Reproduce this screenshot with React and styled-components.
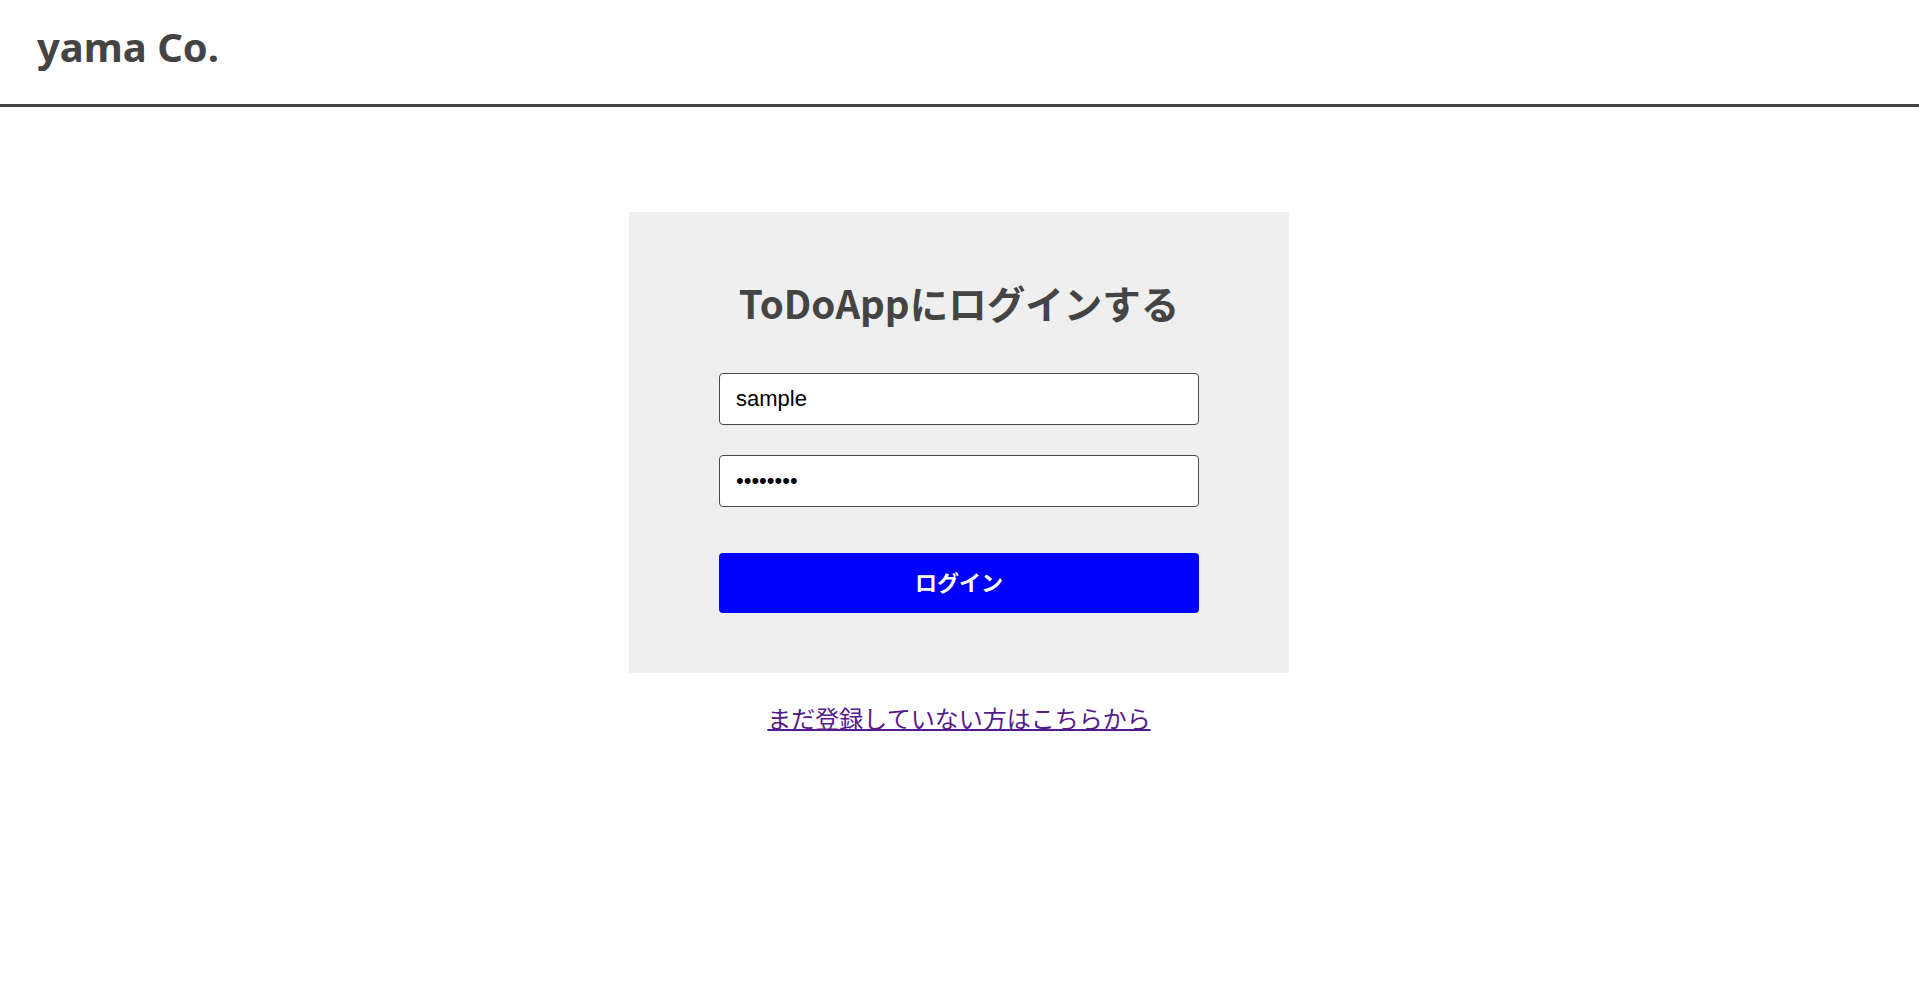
import React from "react";
import styled, { createGlobalStyle } from "styled-components";

const GlobalStyle = createGlobalStyle`
  html, body { margin: 0; padding: 0; background: #fff; }
  body { font-family: "Noto Sans CJK JP", "Noto Sans", sans-serif; }
  * { box-sizing: border-box; }
`;

const Header = styled.header`
  height: 107px;
  padding: 19px 37px 0;
  border-bottom: 3px solid #444;
`;

const Logo = styled.h1`
  margin: 0;
  font-family: "Noto Sans", "Noto Sans CJK JP", sans-serif;
  font-weight: 700;
  font-size: 40px;
  line-height: 56px;
  color: #444;
`;

const Main = styled.main`
  display: flex;
  flex-direction: column;
  align-items: center;
  padding: 105px 1px 0 0;
`;

const Card = styled.form`
  width: 660px;
  background: #efefef;
  padding: 60px 90px;
  display: flex;
  flex-direction: column;
  align-items: stretch;
`;

const Title = styled.h2`
  margin: 0 0 41px;
  text-align: center;
  font-family: "Noto Sans CJK JP", sans-serif;
  font-weight: 700;
  font-size: 38.5px;
  line-height: 60px;
  color: #444;
`;

const Input = styled.input`
  display: block;
  width: 100%;
  height: 52px;
  margin: 0 0 ${(p) => p.$gap}px;
  padding: 0 16px;
  border: 1px solid #4a4a4a;
  border-radius: 4px;
  background: #fff;
  font-family: "Liberation Sans", Arial, sans-serif;
  font-size: 22px;
  color: #000;
  outline: none;
`;

const Button = styled.button`
  display: block;
  width: 100%;
  height: 60px;
  padding: 0 0 4px;
  border: none;
  border-radius: 4px;
  background: #0000ff;
  color: #fff;
  font-family: "Noto Sans CJK JP", sans-serif;
  font-weight: 700;
  font-size: 22px;
  cursor: pointer;
`;

const SignupLink = styled.a`
  margin-top: 27px;
  font-family: "Noto Sans CJK JP", sans-serif;
  font-size: 24px;
  line-height: 36px;
  color: #551a8b;
  text-decoration: underline;
  text-decoration-thickness: 2px;
`;

export default function App() {
  return (
    <>
      <GlobalStyle />
      <Header>
        <Logo>yama Co.</Logo>
      </Header>
      <Main>
        <Card onSubmit={(e) => e.preventDefault()}>
          <Title>ToDoAppにログインする</Title>
          <Input type="text" defaultValue="sample" $gap={30} />
          <Input type="password" defaultValue="password" $gap={46} />
          <Button type="submit">ログイン</Button>
        </Card>
        <SignupLink href="#signup">まだ登録していない方はこちらから</SignupLink>
      </Main>
    </>
  );
}
